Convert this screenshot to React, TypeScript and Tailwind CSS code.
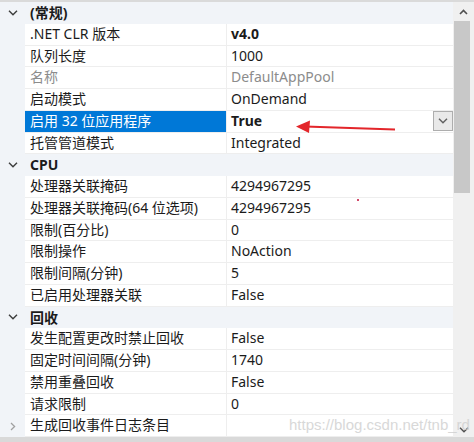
import React from 'react';

type Item =
  | { type: 'group'; label: string }
  | {
      type: 'prop';
      name: string;
      value?: string;
      bold?: boolean;
      muted?: boolean;
      selected?: boolean;
      expandable?: boolean;
    };

const items: Item[] = [
  { type: 'group', label: '(常规)' },
  { type: 'prop', name: '.NET CLR 版本', value: 'v4.0', bold: true },
  { type: 'prop', name: '队列长度', value: '1000' },
  { type: 'prop', name: '名称', value: 'DefaultAppPool', muted: true },
  { type: 'prop', name: '启动模式', value: 'OnDemand' },
  { type: 'prop', name: '启用 32 位应用程序', value: 'True', bold: true, selected: true },
  { type: 'prop', name: '托管管道模式', value: 'Integrated' },
  { type: 'group', label: 'CPU' },
  { type: 'prop', name: '处理器关联掩码', value: '4294967295' },
  { type: 'prop', name: '处理器关联掩码(64 位选项)', value: '4294967295' },
  { type: 'prop', name: '限制(百分比)', value: '0' },
  { type: 'prop', name: '限制操作', value: 'NoAction' },
  { type: 'prop', name: '限制间隔(分钟)', value: '5' },
  { type: 'prop', name: '已启用处理器关联', value: 'False' },
  { type: 'group', label: '回收' },
  { type: 'prop', name: '发生配置更改时禁止回收', value: 'False' },
  { type: 'prop', name: '固定时间间隔(分钟)', value: '1740' },
  { type: 'prop', name: '禁用重叠回收', value: 'False' },
  { type: 'prop', name: '请求限制', value: '0' },
  { type: 'prop', name: '生成回收事件日志条目', expandable: true },
];

const ChevronDown = ({ color = '#3c3c3c' }: { color?: string }) => (
  <svg width="10" height="6" viewBox="0 0 10 6">
    <polyline points="1,0.8 5,4.8 9,0.8" fill="none" stroke={color} strokeWidth="1.4" />
  </svg>
);

const ChevronUp = () => (
  <svg width="9" height="6" viewBox="0 0 9 6">
    <polyline points="1,5 4.5,1.5 8,5" fill="none" stroke="#505050" strokeWidth="1.6" />
  </svg>
);

const ChevronRight = () => (
  <svg width="6" height="9" viewBox="0 0 6 9">
    <polyline points="1,1 4.6,4.5 1,8" fill="none" stroke="#a0a0a0" strokeWidth="1.3" />
  </svg>
);

const App = () => {
  return (
    <div className="relative w-[474px] h-[442px] overflow-hidden bg-white flex flex-col font-['Noto_Sans','Noto_Sans_CJK_SC',sans-serif] text-[14px] text-[#1b1b1b]">
      <div className="h-[2px] shrink-0 bg-[#dadada]" />

      <div className="flex flex-1 min-h-0">
        {/* Property grid */}
        <div className="flex-1 min-w-0 overflow-hidden">
          {items.map((item, i) =>
            item.type === 'group' ? (
              <div key={i} className="flex h-[21.75px] bg-[#f1f4f8]">
                <div className="w-[25px] shrink-0 flex items-center justify-center">
                  <ChevronDown />
                </div>
                <span className="pl-[5px] leading-[21.75px] font-bold">{item.label}</span>
              </div>
            ) : (
              <div key={i} className="flex h-[21.75px]">
                <div className="w-[25px] shrink-0 bg-[#f1f4f8] flex items-center justify-center">
                  {item.expandable && <ChevronRight />}
                </div>
                <div
                  className={`w-[202px] shrink-0 pl-[5px] leading-[20.75px] whitespace-nowrap overflow-hidden border-b border-r border-[#eeeeee] ${
                    item.selected ? 'bg-[#0078d7] text-white' : item.muted ? 'text-[#8c8c8c]' : ''
                  }`}
                >
                  {item.name}
                </div>
                <div className="flex-1 min-w-0 flex items-center justify-between pl-[4px] border-b border-[#eeeeee]">
                  <span
                    className={`leading-[20.75px] ${item.bold ? 'font-bold' : ''} ${
                      item.muted ? 'text-[#8c8c8c]' : ''
                    }`}
                  >
                    {item.value}
                  </span>
                  {item.selected && (
                    <div className="w-[20px] h-[20px] border border-[#adadad] bg-[#e9e9e9] flex items-center justify-center">
                      <ChevronDown color="#606060" />
                    </div>
                  )}
                </div>
              </div>
            )
          )}
        </div>

        {/* Scrollbar */}
        <div className="w-[21px] shrink-0 bg-[#f0f0f0] flex flex-col">
          <div className="h-[19px] flex items-center justify-center">
            <ChevronUp />
          </div>
          <div className="ml-[1px] w-[16px] h-[172px] bg-[#c8c8c8]" />
          <div className="flex-1" />
          <div className="h-[14px] flex items-center justify-center">
            <ChevronDown color="#505050" />
          </div>
        </div>
      </div>

      <div className="h-[5px] shrink-0 bg-[#d9d9d9]" />

      {/* Annotation arrow */}
      <svg className="absolute left-0 top-0 pointer-events-none" width="474" height="442">
        <line x1="395" y1="129.5" x2="305" y2="126.5" stroke="#e3262b" strokeWidth="2.2" />
        <polygon points="296,126.5 310,120.5 309,133" fill="#e3262b" />
      </svg>

      <div className="absolute left-[357px] top-[199px] w-[2px] h-[2px] bg-[#d24a6a]" />

      {/* Watermark */}
      <span className="absolute left-[289px] top-[415px] text-[15px] leading-[20px] text-[#cfcfcf] opacity-80 font-['Liberation_Sans',Arial,sans-serif] pointer-events-none">
        https://blog.csdn.net/tnb_rd
      </span>
    </div>
  );
};

export default App;
